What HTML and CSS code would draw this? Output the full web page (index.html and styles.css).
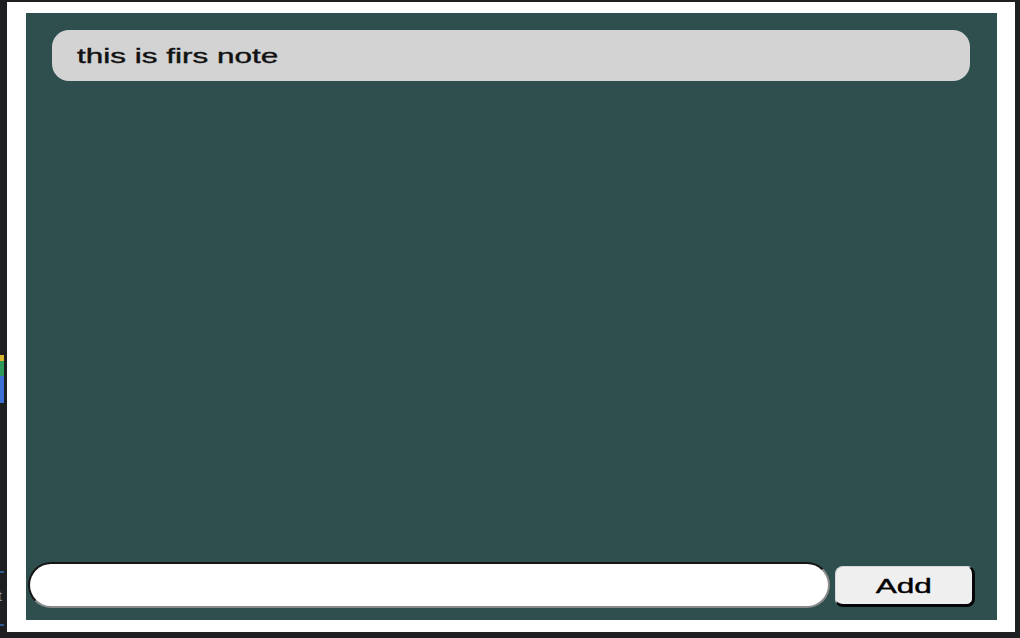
FILE: index.html
```html
<!DOCTYPE html>
<html>
<head>
<meta charset="utf-8">
<link rel="stylesheet" href="styles.css">
</head>
<body>
  <div class="edge-marks">
    <div class="mark mark-yellow"></div>
    <div class="mark mark-green"></div>
    <div class="mark mark-blue"></div>
    <div class="mark mark-line1"></div>
    <span class="mark-t">t</span>
    <div class="mark mark-line2"></div>
  </div>
  <div class="frame">
    <div class="panel">
      <div class="notes">
        <div class="note"><span class="stretch">this is firs note</span></div>
      </div>
      <div class="composer">
        <input class="note-input" type="text">
        <button class="add-btn"><span class="stretch center">Add</span></button>
      </div>
    </div>
  </div>
</body>
</html>
```
FILE: styles.css
```css
html, body {
  margin: 0;
  padding: 0;
  width: 1020px;
  height: 638px;
  overflow: hidden;
  background: #1e1f20;
  font-family: "Liberation Sans", Arial, sans-serif;
}

.frame {
  margin: 2px 5px 6px 7px;
  height: 630px;
  box-sizing: border-box;
  background: #ffffff;
  padding: 11px 18px 12px 19px;
}

.panel {
  height: 100%;
  background: #2f4f4f;
  display: flex;
  flex-direction: column;
  justify-content: space-between;
}

.notes {
  padding: 17px 27px 0 26px;
}

.note {
  height: 51px;
  background: #d3d3d3;
  border-radius: 17px;
  display: flex;
  align-items: center;
  padding-left: 25px;
  padding-top: 1px;
  box-sizing: border-box;
  font-size: 21px;
  color: #111;
  -webkit-text-stroke: 0.4px #111;
}

.stretch {
  display: inline-block;
  transform: scaleX(1.5);
  transform-origin: left center;
}

.stretch.center {
  transform-origin: center center;
}

.composer {
  display: flex;
  align-items: center;
  padding: 0 22px 12px 2px;
  gap: 5px;
}

.note-input {
  width: 802px;
  height: 46px;
  box-sizing: border-box;
  border-radius: 23px;
  border: 2px solid;
  border-color: #151515 #8a8a8a #8a8a8a #151515;
  background: #ffffff;
  outline: none;
  margin: 0;
  padding: 0 20px;
}

.add-btn {
  width: 140px;
  height: 41px;
  box-sizing: border-box;
  border-radius: 8px;
  border-style: solid;
  border-width: 1px 3px 3px 1px;
  border-color: #d8d8d8 #050505 #050505 #d8d8d8;
  background: #efefef;
  font-family: "Liberation Sans", Arial, sans-serif;
  font-size: 21px;
  color: #000;
  -webkit-text-stroke: 0.4px #000;
  padding: 0;
  margin: 0;
  margin-top: 3px;
  line-height: 1;
}

.edge-marks {
  position: absolute;
  left: 0;
  top: 0;
  width: 6px;
  height: 638px;
}

.mark {
  position: absolute;
  left: 0;
  width: 4px;
}

.mark-yellow { top: 355px; height: 6px; background: #d8b531; }
.mark-green { top: 361px; height: 15px; background: #2f9a5a; }
.mark-blue { top: 376px; height: 27px; background: #3d6fd4; }
.mark-line1 { top: 571px; height: 2px; background: #2d5d8a; }
.mark-line2 { top: 624px; height: 2px; background: #2d5d8a; }

.mark-t {
  position: absolute;
  left: -2px;
  top: 589px;
  font-size: 14px;
  color: #7aa0d0;
  line-height: 1;
}
```
